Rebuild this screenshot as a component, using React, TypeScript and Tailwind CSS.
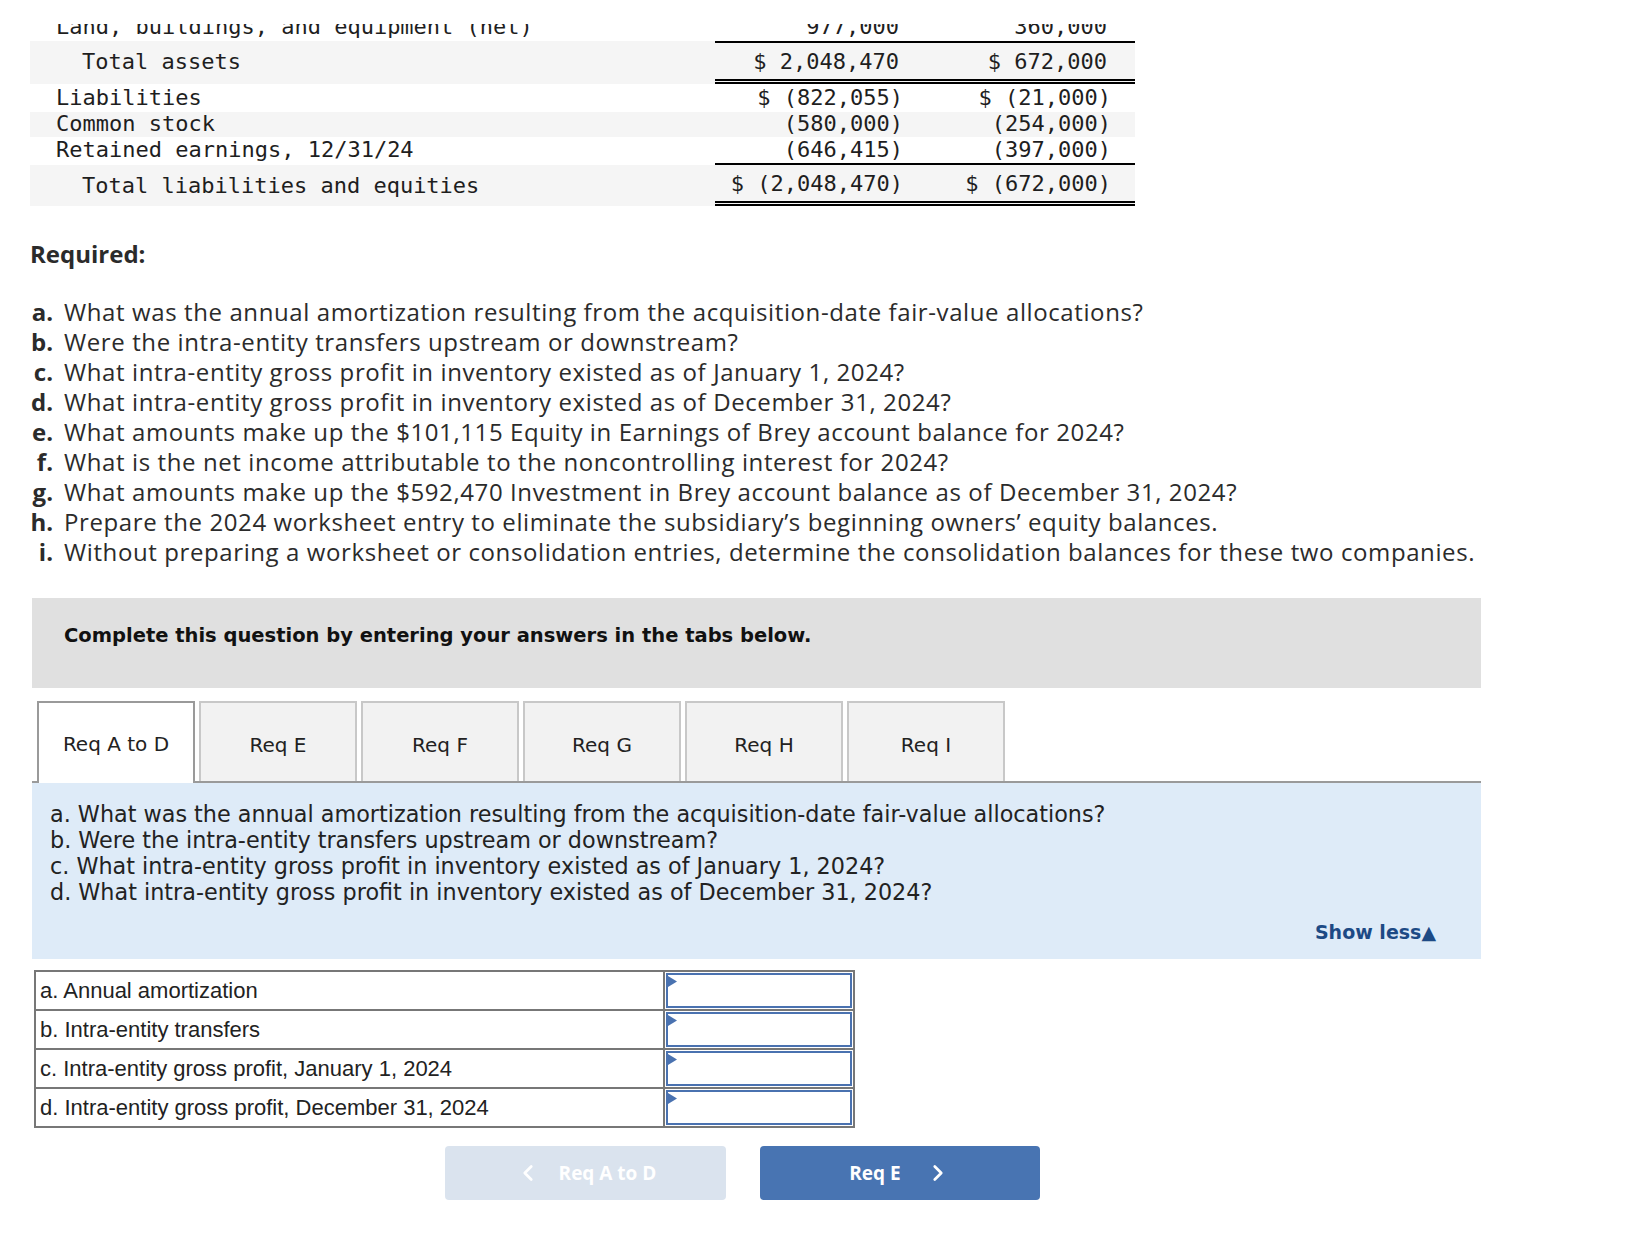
import React from "react";
import { ChevronLeft, ChevronRight } from "lucide-react";

const questions: [string, string][] = [
  ["a.", "What was the annual amortization resulting from the acquisition-date fair-value allocations?"],
  ["b.", "Were the intra-entity transfers upstream or downstream?"],
  ["c.", "What intra-entity gross profit in inventory existed as of January 1, 2024?"],
  ["d.", "What intra-entity gross profit in inventory existed as of December 31, 2024?"],
  ["e.", "What amounts make up the $101,115 Equity in Earnings of Brey account balance for 2024?"],
  ["f.", "What is the net income attributable to the noncontrolling interest for 2024?"],
  ["g.", "What amounts make up the $592,470 Investment in Brey account balance as of December 31, 2024?"],
  ["h.", "Prepare the 2024 worksheet entry to eliminate the subsidiary\u2019s beginning owners\u2019 equity balances."],
  ["i.", "Without preparing a worksheet or consolidation entries, determine the consolidation balances for these two companies."],
];

const tabs = ["Req A to D", "Req E", "Req F", "Req G", "Req H", "Req I"];

const answerRows = [
  "a. Annual amortization",
  "b. Intra-entity transfers",
  "c. Intra-entity gross profit, January 1, 2024",
  "d. Intra-entity gross profit, December 31, 2024",
];

export default function App() {
  return (
    <div className="min-h-[1249px] w-[1640px] bg-white pt-[24px] text-[#222]">
      {/* Balance sheet fragment */}
      <div className="ml-[30px] w-[1105px] font-['DejaVu_Sans_Mono',monospace] text-[22px] text-[#1e1e1e]">
        <div className="flex h-[17px] overflow-hidden">
          <div className="w-[685px] pl-[26px]">
            <div className="-mt-[10px] whitespace-pre leading-[26px]">Land, buildings, and equipment (net)</div>
          </div>
          <div className="w-[210px] pr-[26px] text-right">
            <div className="-mt-[10px] leading-[26px]">977,000</div>
          </div>
          <div className="w-[210px] pr-[28px] text-right">
            <div className="-mt-[10px] leading-[26px]">360,000</div>
          </div>
        </div>
        <div className="flex h-[43px] bg-[#f5f5f5]">
          <div className="flex w-[685px] items-center pb-[2px] pl-[52px]">Total assets</div>
          <div className="flex w-[210px] items-center justify-end border-t-2 border-b-[5px] border-double border-black pr-[26px]">$ 2,048,470</div>
          <div className="flex w-[210px] items-center justify-end border-t-2 border-b-[5px] border-double border-black pr-[28px]">$ 672,000</div>
        </div>
        <div className="flex h-[28px]">
          <div className="flex w-[685px] items-center pb-[2px] pl-[26px]">Liabilities</div>
          <div className="flex w-[210px] items-center justify-end pb-[2px] pr-[22px]">$ (822,055)</div>
          <div className="flex w-[210px] items-center justify-end pb-[2px] pr-[24px]">$ (21,000)</div>
        </div>
        <div className="flex h-[25px] bg-[#f5f5f5]">
          <div className="flex w-[685px] items-center pb-[2px] pl-[26px]">Common stock</div>
          <div className="flex w-[210px] items-center justify-end pb-[2px] pr-[22px]">(580,000)</div>
          <div className="flex w-[210px] items-center justify-end pb-[2px] pr-[24px]">(254,000)</div>
        </div>
        <div className="flex h-[28px]">
          <div className="flex w-[685px] items-center pb-[4px] pl-[26px]">Retained earnings, 12/31/24</div>
          <div className="flex w-[210px] items-center justify-end border-b-2 border-black pb-[2px] pr-[22px]">(646,415)</div>
          <div className="flex w-[210px] items-center justify-end border-b-2 border-black pb-[2px] pr-[24px]">(397,000)</div>
        </div>
        <div className="flex h-[41px] bg-[#f5f5f5]">
          <div className="flex w-[685px] items-center pl-[52px]">Total liabilities and equities</div>
          <div className="flex w-[210px] items-center justify-end border-b-[5px] border-double border-black pr-[22px]">$ (2,048,470)</div>
          <div className="flex w-[210px] items-center justify-end border-b-[5px] border-double border-black pr-[24px]">$ (672,000)</div>
        </div>
      </div>

      {/* Required */}
      <div className="ml-[30px] mt-[33px] font-['Open_Sans',sans-serif] leading-[30px] text-[#2b2b2b]">
        <div className="text-[24px] font-bold">Required:</div>
        <div className="mt-[28px] text-[24px] tracking-[0.6px]">
          {questions.map(([l, t]) => (
            <div key={l} className="flex">
              <span className="w-[23px] shrink-0 text-right font-bold tracking-normal">{l}</span>
              <span className="ml-[11px] whitespace-nowrap">{t}</span>
            </div>
          ))}
        </div>
      </div>

      {/* Gray instruction box */}
      <div className="ml-[32px] mt-[31px] h-[90px] w-[1449px] bg-[#e0e0e0] pl-[32px] pt-[26px] font-['DejaVu_Sans',sans-serif] text-[19.5px] font-bold leading-[24px] text-[#111]">
        Complete this question by entering your answers in the tabs below.
      </div>

      {/* Tabs */}
      <div className="ml-[32px] mt-[13px] w-[1449px]">
        <div className="flex items-end gap-[4px] border-b-2 border-[#9a9a9a] pl-[5px] font-['DejaVu_Sans',sans-serif] text-[20px] text-[#222]">
          {tabs.map((t, i) =>
            i === 0 ? (
              <div key={t} className="-mb-[2px] flex h-[82px] w-[158px] items-center justify-center border-2 border-b-0 border-[#9a9a9a] bg-white pb-[2px] pt-[4px]">
                {t}
              </div>
            ) : (
              <div key={t} className="flex h-[80px] w-[158px] items-center justify-center border-2 border-b-0 border-[#c8c8c8] bg-[#f2f2f2] pt-[6px]">
                {t}
              </div>
            )
          )}
        </div>
        <div className="flex h-[176px] flex-col bg-[#deebf8] pl-[18px] pr-[45px] pt-[18px] font-['DejaVu_Sans',sans-serif] text-[22.3px] leading-[26px] text-[#222]">
          <div>a. What was the annual amortization resulting from the acquisition-date fair-value allocations?</div>
          <div>b. Were the intra-entity transfers upstream or downstream?</div>
          <div>c. What intra-entity gross profit in inventory existed as of January 1, 2024?</div>
          <div>d. What intra-entity gross profit in inventory existed as of December 31, 2024?</div>
          <div className="mt-[15px] self-end text-[19px] font-bold leading-[24px] text-[#1d4a85]">{"Show less\u25B2"}</div>
        </div>
      </div>

      {/* Answer table */}
      <div className="ml-[34px] mt-[11px] w-[821px] border-2 border-[#777] font-['Liberation_Sans',sans-serif] text-[22px] text-[#222]">
        {answerRows.map((r, i) => (
          <div key={r} className={i < answerRows.length - 1 ? "flex h-[39px] border-b-2 border-[#777]" : "flex h-[37px]"}>
            <div className="flex w-[629px] items-center border-r-2 border-[#777] pl-[4px]">{r}</div>
            <div className="flex-1 p-[1px]">
              <div className="relative h-full border-2 border-[#4a72b0] bg-white">
                <svg className="absolute left-0 top-[1px]" width="9" height="11" viewBox="0 0 9 11">
                  <polygon points="0,0 9,5.5 0,11" fill="#4a72b0" />
                </svg>
              </div>
            </div>
          </div>
        ))}
      </div>

      {/* Nav buttons */}
      <div className="ml-[445px] mt-[18px] flex gap-[34px] font-['Open_Sans',sans-serif] text-[19px] font-bold text-white">
        <div className="flex h-[54px] w-[281px] items-center justify-center gap-[18px] rounded-[4px] bg-[#dae3ee]">
          <ChevronLeft size={26} strokeWidth={2.5} />
          <span>Req A to D</span>
        </div>
        <div className="flex h-[54px] w-[280px] items-center justify-center gap-[24px] rounded-[4px] bg-[#4874b2]">
          <span>Req E</span>
          <ChevronRight size={26} strokeWidth={2.5} />
        </div>
      </div>
    </div>
  );
}
